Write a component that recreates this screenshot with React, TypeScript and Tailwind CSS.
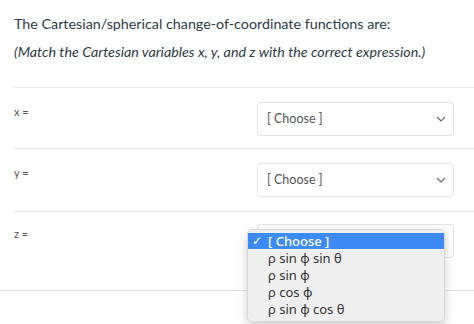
import React from 'react';

const rows = [
  { label: 'x =', h: 'h-[61px]', pt: 'pt-[14px]', open: false },
  { label: 'y =', h: 'h-[63px]', pt: 'pt-[14px]', open: false },
  { label: 'z =', h: 'h-[79px]', pt: 'pt-[12px]', open: true },
];

const options = ['ρ sin ϕ sin θ', 'ρ sin ϕ', 'ρ cos ϕ', 'ρ sin ϕ cos θ'];

const Chevron = () => (
  <svg width="10" height="6" viewBox="0 0 10 6" fill="none" stroke="#6b6b6b" strokeWidth="1.2">
    <path d="M1 1l4 4 4-4" />
  </svg>
);

const App: React.FC = () => {
  return (
    <div className="relative w-[474px] h-[324px] bg-white overflow-hidden font-['Lato',sans-serif] text-[#2d3b45]">
      <div className="px-[14px] pt-[15px]">
        <p className="text-[14.3px] leading-[18px]">The Cartesian/spherical change-of-coordinate functions are:</p>
        <p className="text-[14.3px] leading-[18px] italic mt-[10px]">(Match the Cartesian variables x, y, and z with the correct expression.)</p>
      </div>

      <div className="ml-[14px] mt-[26px]">
        {rows.map((r) => (
          <div key={r.label} className={`flex border-t border-[#e6e6e6] ${r.h} ${r.pt}`}>
            <div className="w-[243px] pt-[3px] text-[11px] leading-[14px] text-[#555]">{r.label}</div>
            <div className="w-[197px] h-[34px] flex items-center justify-between rounded-[4px] border border-[#e4e4e4] bg-white pl-[9px] pr-[7px] shadow-[0_0_1px_rgba(0,0,0,0.06)]">
              {/* open select: its value is hidden under the menu */}
              <span className="text-[12.5px] text-[#555] whitespace-pre">{r.open ? '' : '[ Choose ]'}</span>
              <Chevron />
            </div>
          </div>
        ))}
      </div>
      <div className="border-t border-[#e2e2e2]" />

      <div className="absolute left-[247px] top-[229px] w-[198px] h-[93px] rounded-[5px] bg-[#efefef] border border-[#d9d9d9] shadow-[0_4px_10px_rgba(0,0,0,0.2)] pt-[3px] font-['Noto_Sans',sans-serif] text-[13px] leading-[14px] text-[#333]">
        <div className="flex items-center h-[16px] bg-[#3c8af4] text-white font-medium leading-[14px] overflow-hidden">
          <span className="w-[20px] pl-[4px] text-[12px] leading-[14px]">✓</span>
          <span className="whitespace-pre">[ Choose ]</span>
        </div>
        {options.map((o) => (
          <div key={o} className="flex items-center h-[17px] pl-[20px]">{o}</div>
        ))}
      </div>
    </div>
  );
};

export default App;
